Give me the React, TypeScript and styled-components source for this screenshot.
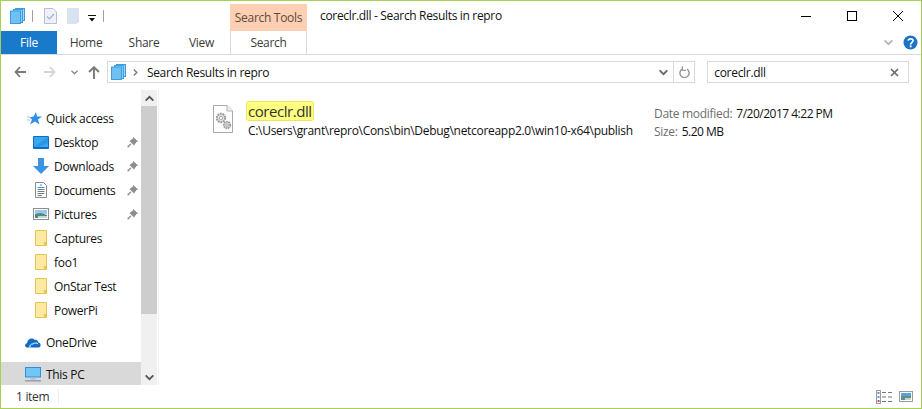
import React from 'react';
import styled, { createGlobalStyle } from 'styled-components';

const GlobalStyle = createGlobalStyle`
  html, body {
    margin: 0;
    padding: 0;
    background: #fff;
  }
  * {
    box-sizing: border-box;
  }
`;

const StackIcon = () => (
  <svg width="15" height="16" viewBox="0 0 15 16">
    <rect x="5.5" y="0.5" width="9" height="12" fill="#a5d8f7" stroke="#3f9be0" />
    <rect x="3.5" y="1.5" width="9" height="13" fill="#8ccdf5" stroke="#3f9be0" />
    <rect x="0.5" y="3" width="10" height="12.5" fill="#6fc0f3" stroke="#3f9be0" />
  </svg>
);

const CheckDocIcon = () => (
  <svg width="13" height="16" viewBox="0 0 13 16">
    <path d="M0.5 0.5H9L12.5 4V15.5H0.5Z" fill="#eef2f8" stroke="#b4c0d4" />
    <path d="M3 8.5L5.5 11L10 6" fill="none" stroke="#a3b0c4" strokeWidth="1.2" />
  </svg>
);

const BlankDocIcon = () => (
  <svg width="13" height="16" viewBox="0 0 13 16">
    <path d="M0 0H12V12L9 16H0Z" fill="#d9e2f0" />
    <path d="M10 12.5H12.5L10 15.5Z" fill="#c6d2e4" />
  </svg>
);

const QatDownIcon = () => (
  <svg width="8" height="7" viewBox="0 0 8 7">
    <rect x="0" y="0" width="8" height="1" fill="#111" />
    <path d="M1 3H7L4 6.5Z" fill="#111" />
  </svg>
);

const NavArrow = ({ color, flip }: { color: string; flip?: boolean }) => (
  <svg width="12" height="12" viewBox="0 0 12 12" style={flip ? { transform: 'scaleX(-1)' } : undefined}>
    <path d="M6 1L1.5 6L6 11M1.5 6H12" fill="none" stroke={color} strokeWidth="1.8" />
  </svg>
);

const UpArrow = () => (
  <svg width="12" height="13" viewBox="0 0 12 13">
    <path d="M1 6L6 1.2L11 6M6 1.5V13" fill="none" stroke="#7a7a7a" strokeWidth="1.9" />
  </svg>
);

const SmallChevron = ({ color, size = 7 }: { color: string; size?: number }) => (
  <svg width={size} height={size - 2} viewBox="0 0 7 5">
    <path d="M0.5 0.8L3.5 3.8L6.5 0.8" fill="none" stroke={color} strokeWidth="1.4" />
  </svg>
);

const RightChevron = () => (
  <svg width="5" height="7" viewBox="0 0 5 7">
    <path d="M0.8 0.5L3.8 3.5L0.8 6.5" fill="none" stroke="#7c7c7c" strokeWidth="1.4" />
  </svg>
);

const RefreshIcon = () => (
  <svg width="11" height="13" viewBox="0 0 11 13">
    <path d="M3 3.2A4.6 4.6 0 1 0 8 3.2" fill="none" stroke="#9a9a9a" strokeWidth="1.4" />
    <path d="M3.4 0.2V4.4H7" fill="none" stroke="#9a9a9a" strokeWidth="1.3" />
  </svg>
);

const ClearIcon = () => (
  <svg width="9" height="9" viewBox="0 0 9 9">
    <path d="M1 1L8 8M8 1L1 8" stroke="#6b6b6b" strokeWidth="1.7" />
  </svg>
);

const MinimizeIcon = () => (
  <svg width="10" height="10" viewBox="0 0 10 10">
    <rect x="0" y="5" width="10" height="1" fill="#000" />
  </svg>
);

const MaximizeIcon = () => (
  <svg width="10" height="10" viewBox="0 0 10 10">
    <rect x="0.5" y="0.5" width="9" height="9" fill="none" stroke="#000" />
  </svg>
);

const CloseIcon = () => (
  <svg width="10" height="10" viewBox="0 0 10 10">
    <path d="M0 0L10 10M10 0L0 10" stroke="#000" strokeWidth="1" />
  </svg>
);

const HelpIcon = () => (
  <svg width="15" height="15" viewBox="0 0 15 15">
    <circle cx="7.5" cy="7.5" r="7" fill="#1a73c4" />
    <path d="M5.2 5.6C5.4 3.2 10 3.2 10 5.8C10 7.6 7.6 7.6 7.6 9.4" fill="none" stroke="#fff" strokeWidth="1.7" />
    <rect x="6.7" y="10.4" width="1.9" height="1.9" fill="#fff" />
  </svg>
);

const StarIcon = () => (
  <svg width="17" height="13" viewBox="-2 0 17 13">
    <path d="M9 0L10 4.4H15L11 7.4L12.4 12.4L8 9.5L3 12.6L5 7.6L2.6 5.4L6.6 4.6Z" fill="#2f8fe4" />
    <path d="M0 5H3M0 8H3" stroke="#9ccaf2" />
  </svg>
);

const PinIcon = () => (
  <svg width="11" height="11" viewBox="0 0 11 11">
    <path d="M6.4 0L11 4.6L9.2 5.2L7 8.6L2.4 4L5.8 1.8Z" fill="#8d8d8d" />
    <path d="M3.8 6.9L0.6 10.2" stroke="#8d8d8d" strokeWidth="1.4" />
  </svg>
);

const DesktopIcon = () => (
  <svg width="16" height="13" viewBox="0 0 16 13">
    <rect x="0" y="0" width="16" height="13" rx="1" fill="#0f6cc4" />
    <path d="M1 1H15V11H1Z" fill="#38a7ef" />
    <path d="M15 1V7L6 11H1Z" fill="#2b95e6" />
  </svg>
);

const DownloadsIcon = () => (
  <svg width="16" height="16" viewBox="0 0 16 16">
    <path d="M5 0H11V8H16L8 16L0 8H5Z" fill="#3b93e3" />
  </svg>
);

const DocumentsIcon = () => (
  <svg width="12" height="16" viewBox="0 0 12 16">
    <path d="M0.5 0.5H8.5L11.5 3.5V15.5H0.5Z" fill="#fff" stroke="#8a8a8a" />
    <path d="M5 3H7M2.5 5.5H9.5" stroke="#3b93e3" />
    <path d="M2.5 7.5H9.5M2.5 9.5H9.5M2.5 11.5H9.5M2.5 13.5H7" stroke="#6f7f8f" />
  </svg>
);

const PicturesIcon = () => (
  <svg width="16" height="12" viewBox="0 0 16 12">
    <rect x="0.5" y="0.5" width="15" height="11" fill="#fff" stroke="#8d8d8d" />
    <rect x="2" y="2" width="12" height="4" fill="#9cc6ea" />
    <path d="M2 6L8 5L14 7V10H2Z" fill="#4f8a86" />
    <path d="M5 8H14V10H5Z" fill="#c4d6d4" />
  </svg>
);

const FolderIcon = () => (
  <svg width="12" height="16" viewBox="0 0 12 16">
    <path d="M0.5 0.5H11.5V12.5H9.5V15.5H0.5Z" fill="#fee9a0" stroke="#e7c451" />
    <rect x="9.5" y="12" width="2.5" height="4" fill="#e7c451" />
  </svg>
);

const CloudIcon = () => (
  <svg width="16" height="11" viewBox="0 0 16 11">
    <path d="M2 10.5C-0.5 10.5 -0.5 6.5 2 6.2C2.4 2 7 0 9.4 2.8C12 2.2 13.4 4.2 13.2 5.6C16.4 5.8 16.4 10.5 13.4 10.5Z" fill="#0f6cc4" />
    <path d="M5 10.5C4.4 8.4 6 6.6 8 7C9.4 5.6 12.4 5.6 13.2 7.2" fill="none" stroke="#fff" strokeWidth="1" />
  </svg>
);

const ThisPcIcon = () => (
  <svg width="16" height="15" viewBox="0 0 16 15">
    <rect x="0" y="0" width="16" height="10.5" fill="#2f8fdc" />
    <path d="M1 1H15V9.5H1Z" fill="#6fc6f7" />
    <rect x="5.5" y="10.5" width="5" height="2" fill="#b4bcc4" />
    <rect x="0" y="13" width="16" height="1.5" fill="#8fa0b0" />
  </svg>
);

const GearFileIcon = () => (
  <svg width="20" height="28" viewBox="0 0 20 28">
    <path d="M0.5 0.5H14L19.5 6V27.5H0.5Z" fill="#fdfdfd" stroke="#a9a9a9" />
    <path d="M14 0.5V6H19.5" fill="#eee" stroke="#b5b5b5" />
    <circle cx="8" cy="13" r="4.2" fill="#e2e2e2" stroke="#999" strokeWidth="2" strokeDasharray="1.8 0.8" />
    <circle cx="8" cy="13" r="1.6" fill="#fff" stroke="#8c8c8c" strokeWidth="0.7" />
    <circle cx="14" cy="20" r="3.2" fill="#e2e2e2" stroke="#999" strokeWidth="1.8" strokeDasharray="1.6 0.7" />
    <circle cx="14" cy="20" r="1.2" fill="#fff" stroke="#8c8c8c" strokeWidth="0.7" />
  </svg>
);

const DetailsViewIcon = () => (
  <svg width="16" height="14" viewBox="0 0 16 14">
    <rect x="0.5" y="0.5" width="4" height="13" fill="#fff" stroke="#9a9a9a" />
    <rect x="1.5" y="2" width="2" height="2" fill="#7d8b99" />
    <rect x="1.5" y="6" width="2" height="2" fill="#5a9bd6" />
    <rect x="1.5" y="10" width="2" height="2" fill="#c0504d" />
    <path d="M6 2.5H10M12 2.5H16M6 7H10M12 7H16M6 11.5H10M12 11.5H16" stroke="#777" />
  </svg>
);

const ThumbViewIcon = () => (
  <svg width="14" height="11" viewBox="0 0 14 11">
    <rect x="0.5" y="0.5" width="13" height="10" fill="#fff" stroke="#9a9a9a" />
    <rect x="2" y="2" width="10" height="3" fill="#5f9ed6" />
    <path d="M2 5H12V9H2Z" fill="#5f8f88" />
    <path d="M6 7H12V9H6Z" fill="#c6d6d4" />
  </svg>
);

const navGroups = [
  {
    key: 'quick',
    head: { label: 'Quick access', icon: <StarIcon /> },
    items: [
      { label: 'Desktop', icon: <DesktopIcon />, pinned: true },
      { label: 'Downloads', icon: <DownloadsIcon />, pinned: true },
      { label: 'Documents', icon: <DocumentsIcon />, pinned: true },
      { label: 'Pictures', icon: <PicturesIcon />, pinned: true },
      { label: 'Captures', icon: <FolderIcon /> },
      { label: 'foo1', icon: <FolderIcon /> },
      { label: 'OnStar Test', icon: <FolderIcon /> },
      { label: 'PowerPi', icon: <FolderIcon /> },
    ],
  },
  { key: 'onedrive', head: { label: 'OneDrive', icon: <CloudIcon /> }, items: [] },
  { key: 'pc', head: { label: 'This PC', icon: <ThisPcIcon /> }, items: [], selected: true },
];

const App: React.FC = () => {
  return (
    <>
      <GlobalStyle />
      <Window>
        <TitleBar>
          <QuickAccess>
            <StackIcon />
            <QatDivider />
            <CheckDocIcon />
            <BlankDocIcon />
            <QatDownIcon />
            <QatDivider />
          </QuickAccess>
          <ContextTab>Search Tools</ContextTab>
          <WindowTitle>coreclr.dll - Search Results in repro</WindowTitle>
          <WindowControls>
            <WindowButton><MinimizeIcon /></WindowButton>
            <WindowButton><MaximizeIcon /></WindowButton>
            <WindowButton><CloseIcon /></WindowButton>
          </WindowControls>
        </TitleBar>

        <Ribbon>
          <FileTab>File</FileTab>
          <RibbonTab $width={58}>Home</RibbonTab>
          <RibbonTab $width={58}>Share</RibbonTab>
          <RibbonTab $width={57}>View</RibbonTab>
          <SearchTab>Search</SearchTab>
          <RibbonEnd>
            <SmallChevron color="#b5b5b5" size={9} />
            <HelpIcon />
          </RibbonEnd>
        </Ribbon>

        <AddressRow>
          <NavButtons>
            <NavArrow color="#7a7a7a" />
            <NavArrow color="#d4d4d4" flip />
            <SmallChevron color="#8a8a8a" />
            <UpArrow />
          </NavButtons>
          <AddressBox>
            <StackIcon />
            <RightChevron />
            <AddressText>Search Results in repro</AddressText>
            <AddressDrop>
              <SmallChevron color="#666" size={9} />
            </AddressDrop>
            <AddressRefresh>
              <RefreshIcon />
            </AddressRefresh>
          </AddressBox>
          <SearchBox>
            <SearchText>coreclr.dll</SearchText>
            <ClearIcon />
          </SearchBox>
        </AddressRow>

        <Body>
          <NavPane>
            <NavList>
              {navGroups.map((group) => (
                <NavGroup key={group.key}>
                  <NavHead $selected={group.selected}>
                    <NavHeadIcon>{group.head.icon}</NavHeadIcon>
                    {group.head.label}
                  </NavHead>
                  {group.items.map((item) => (
                    <NavItem key={item.label}>
                      <NavItemIcon>{item.icon}</NavItemIcon>
                      <NavItemLabel>{item.label}</NavItemLabel>
                      {item.pinned && <PinIcon />}
                    </NavItem>
                  ))}
                </NavGroup>
              ))}
            </NavList>
            <Scrollbar>
              <ScrollButton>
                <SmallChevron color="#555" size={9} />
              </ScrollButton>
              <ScrollTrack>
                <ScrollThumb />
              </ScrollTrack>
              <ScrollButton $down>
                <SmallChevron color="#555" size={9} />
              </ScrollButton>
            </Scrollbar>
          </NavPane>

          <ResultPane>
            <ResultRow>
              <ResultIcon>
                <GearFileIcon />
              </ResultIcon>
              <ResultText>
                <ResultName>coreclr.dll</ResultName>
                <ResultPath>C:\Users\grant\repro\Cons\bin\Debug\netcoreapp2.0\win10-x64\publish</ResultPath>
              </ResultText>
              <ResultMeta>
                <MetaLine>
                  <MetaKey>Date modified:</MetaKey>
                  <MetaValue>7/20/2017 4:22 PM</MetaValue>
                </MetaLine>
                <MetaLine>
                  <MetaKey>Size:</MetaKey>
                  <MetaValue>5.20 MB</MetaValue>
                </MetaLine>
              </ResultMeta>
            </ResultRow>
          </ResultPane>
        </Body>

        <StatusBar>
          <StatusCount>1 item</StatusCount>
          <ViewIcons>
            <DetailsViewIcon />
            <ThumbViewIcon />
          </ViewIcons>
        </StatusBar>
      </Window>
    </>
  );
};
export default App;

const Window = styled.div`
  width: 922px;
  height: 409px;
  border: 1px solid #a6d151;
  background: #fff;
  display: flex;
  flex-direction: column;
  overflow: hidden;
  font-family: 'Open Sans', 'Noto Sans', sans-serif;
  font-size: 12px;
  letter-spacing: -0.3px;
  color: #1a1a1a;
`;
const TitleBar = styled.div`
  height: 30px;
  display: flex;
  align-items: flex-end;
`;
const QuickAccess = styled.div`
  width: 229px;
  height: 30px;
  padding: 7px 0 0 9px;
  display: flex;
  align-items: flex-start;
  gap: 7px;

  & > svg:nth-child(3) {
    margin-left: 4px;
  }
  & > svg:nth-child(4) {
    margin-left: 3px;
  }
  & > svg:nth-child(5) {
    margin: 7px 0 0 1px;
  }
`;
const QatDivider = styled.div`
  width: 1px;
  height: 12px;
  margin-top: 2px;
  background: #a0a0a0;
`;
const ContextTab = styled.div`
  width: 77px;
  height: 27px;
  background: #ffcfb3;
  color: #5a4a40;
  display: flex;
  align-items: center;
  justify-content: center;
`;
const WindowTitle = styled.div`
  margin-left: 13px;
  height: 30px;
  line-height: 30px;
  letter-spacing: -0.33px;
  color: #111;
`;
const WindowControls = styled.div`
  margin-left: auto;
  display: flex;
  height: 30px;
`;
const WindowButton = styled.div`
  width: 46px;
  height: 30px;
  display: flex;
  align-items: center;
  justify-content: center;
`;
const Ribbon = styled.div`
  height: 24px;
  display: flex;
  border-bottom: 1px solid #d9d9d9;
`;
const FileTab = styled.div`
  width: 56px;
  height: 23px;
  background: #1979ca;
  color: #fff;
  display: flex;
  align-items: center;
  justify-content: center;
`;
const RibbonTab = styled.div<{ $width: number }>`
  width: ${(p) => p.$width}px;
  display: flex;
  align-items: center;
  justify-content: center;
  color: #3b3b3b;
`;
const SearchTab = styled.div`
  width: 77px;
  border-left: 1px solid #d9d9d9;
  border-right: 1px solid #d9d9d9;
  display: flex;
  align-items: center;
  justify-content: center;
  color: #3b3b3b;
`;
const RibbonEnd = styled.div`
  margin-left: auto;
  padding-right: 3px;
  display: flex;
  align-items: center;
  gap: 10px;
`;
const AddressRow = styled.div`
  height: 35px;
  padding: 6px 12px 0 13px;
  display: flex;
  align-items: flex-start;
`;
const NavButtons = styled.div`
  width: 93px;
  height: 22px;
  display: flex;
  align-items: center;
  gap: 18px;

  & > svg:nth-child(3) {
    margin-left: -3px;
  }
  & > svg:nth-child(4) {
    margin-left: -8px;
  }
`;
const AddressBox = styled.div`
  width: 589px;
  height: 22px;
  border: 1px solid #d9d9d9;
  padding-left: 3px;
  display: flex;
  align-items: center;

  & > svg:nth-child(2) {
    margin-left: 7px;
  }
`;
const AddressText = styled.div`
  margin-left: 9px;
  flex: 1;
  color: #111;
`;
const AddressDrop = styled.div`
  width: 20px;
  display: flex;
  justify-content: center;
`;
const AddressRefresh = styled.div`
  width: 21px;
  height: 20px;
  border-left: 1px solid #d9d9d9;
  display: flex;
  align-items: center;
  justify-content: center;
`;
const SearchBox = styled.div`
  width: 202px;
  height: 22px;
  margin-left: 12px;
  border: 1px solid #d9d9d9;
  padding: 0 9px 0 6px;
  display: flex;
  align-items: center;
  justify-content: space-between;
`;
const SearchText = styled.div`
  color: #111;
`;
const Body = styled.div`
  flex: 1;
  min-height: 0;
  display: flex;
`;
const NavPane = styled.div`
  width: 158px;
  display: flex;
  border-right: 1px solid #f2f2f2;
`;
const NavList = styled.div`
  width: 140px;
  padding-top: 16px;
  display: flex;
  flex-direction: column;
  gap: 8px;
  overflow: hidden;
`;
const NavGroup = styled.div`
  display: flex;
  flex-direction: column;
`;
const NavHead = styled.div<{ $selected?: boolean }>`
  height: 24px;
  padding-left: 24px;
  display: flex;
  align-items: center;
  background: ${(p) => (p.$selected ? '#d9d9d9' : 'transparent')};
  color: #111;
`;
const NavHeadIcon = styled.div`
  width: 21px;
  display: flex;
  align-items: center;
`;
const NavItem = styled.div`
  height: 24px;
  padding: 0 3px 0 32px;
  display: flex;
  align-items: center;
  color: #111;
`;
const NavItemIcon = styled.div`
  width: 21px;
  display: flex;
  justify-content: center;
  padding-right: 5px;
`;
const NavItemLabel = styled.div`
  flex: 1;
`;
const Scrollbar = styled.div`
  width: 16px;
  background: #f0f0f0;
  display: flex;
  flex-direction: column;
`;
const ScrollButton = styled.div<{ $down?: boolean }>`
  height: 16px;
  display: flex;
  align-items: center;
  justify-content: center;

  svg {
    transform: ${(p) => (p.$down ? 'none' : 'rotate(180deg)')};
  }
`;
const ScrollTrack = styled.div`
  flex: 1;
`;
const ScrollThumb = styled.div`
  height: 208px;
  background: #cdcdcd;
`;
const ResultPane = styled.div`
  flex: 1;
  padding: 11px 0 0 54px;
`;
const ResultRow = styled.div`
  display: flex;
`;
const ResultIcon = styled.div`
  width: 33px;
  padding-top: 4px;
`;
const ResultText = styled.div`
  width: 408px;
  display: flex;
  flex-direction: column;
  align-items: flex-start;
`;
const ResultName = styled.div`
  height: 20px;
  padding: 0 1px;
  background: #ffff80;
  border: 1px solid #f4e25a;
  border-radius: 3px;
  font-size: 15px;
  line-height: 18px;
  letter-spacing: -0.45px;
  color: #333;
`;
const ResultPath = styled.div`
  margin: 1px 0 0 2px;
  line-height: 18px;
  white-space: nowrap;
  color: #111;
`;
const ResultMeta = styled.div`
  padding-top: 3px;
  display: flex;
  flex-direction: column;
`;
const MetaLine = styled.div`
  height: 18px;
  display: flex;
  align-items: center;
  gap: 4px;
`;
const MetaKey = styled.span`
  color: #6d6d6d;
`;
const MetaValue = styled.span`
  letter-spacing: -0.5px;
  color: #111;
`;
const StatusBar = styled.div`
  height: 23px;
  padding: 0 8px 0 15px;
  display: flex;
  align-items: center;
  justify-content: space-between;
  color: #333;
`;
const StatusCount = styled.div`
  width: 43px;
  height: 15px;
  line-height: 15px;
  border-right: 1px solid #eee;
`;
const ViewIcons = styled.div`
  display: flex;
  align-items: center;
  gap: 7px;
`;
